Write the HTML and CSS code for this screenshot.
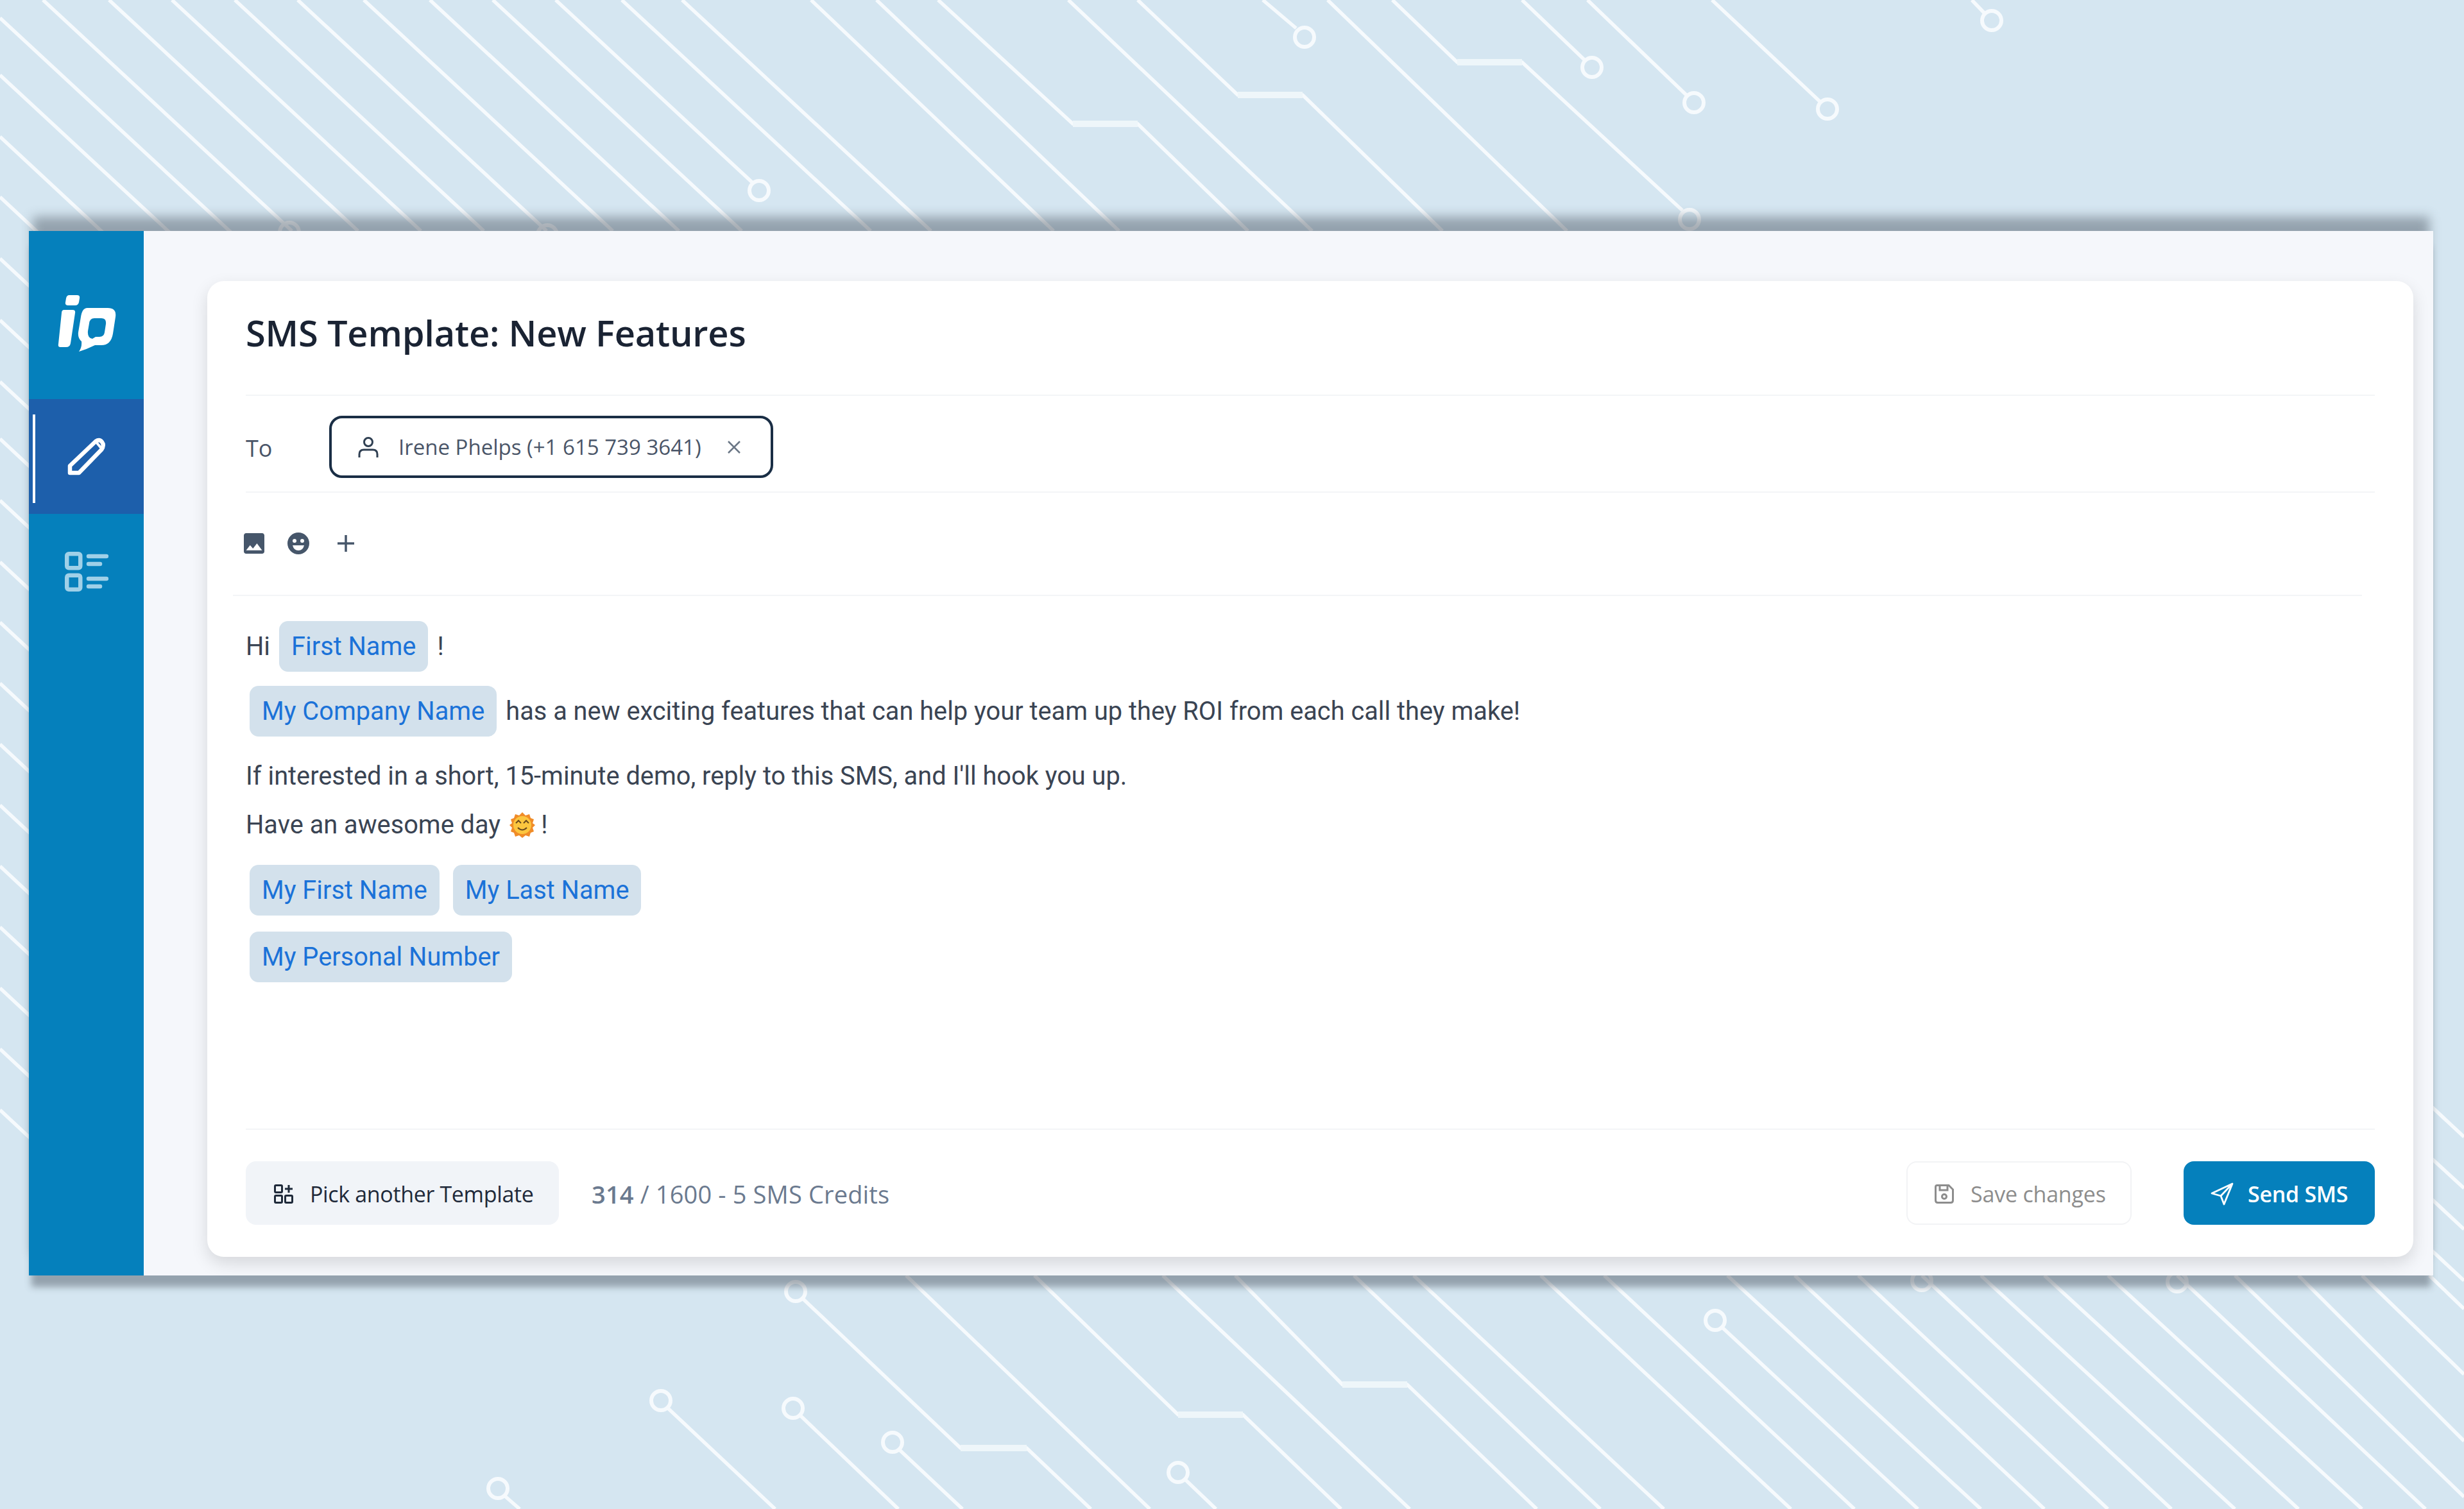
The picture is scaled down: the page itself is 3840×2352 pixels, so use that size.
FILE: index.html
```html
<!DOCTYPE html>
<html>
<head>
    <title>SMS Template</title>
    <link rel="stylesheet" href="styles.css">
</head>
<body>
    <!-- circuit lines behind the app window -->
    <svg class="circuit" viewBox="0 0 3840 2352">
        <path class="trace" d="M67 0L455 360M170 0L558 360M268 0L656 360M366 0L754 360M464 0L852 360M567 0L955 360M670 0L1058 360M768 0L1156 360M866 0L1172 284M969 0L1357 360M1063 0L1451 360M1264 0L1642 360M1366 0L1744 360
            M1462 0L1672 193L1773 193L1945 360M1665 0L2045 360M1773 0L1929 148L2030 148L2248 360M1968 0L2020 44M2069 0L2442 360M2170 0L2271 97L2372 97L2622 328M2372 0L2470 94M2474 0L2628 148M2668 0L2836 158M3073 0L3094 22
            M0 28L388 388M0 117L388 477M0 213L160 362M0 307L60 363M0 403L60 459M0 499L60 555M0 595L60 651M0 684L60 740M0 780L60 836M0 876L60 932M0 970L60 1026M0 1065L60 1121M0 1160L60 1216M0 1255L60 1311M0 1350L60 1406M0 1445L60 1501M0 1540L60 1596M0 1635L60 1691M0 1730L60 1786
            M1252 2025L1497 2257L1600 2257L1700 2352M1041 2195L1208 2352M1248 2207L1400 2352M1402 2260L1500 2352M787 2332L810 2352M1848 2307L1895 2352
            M1412 1988L1792 2352M1612 1988L1836 2205L1937 2205L2090 2352M1812 1988L2197 2352M1925 1988L2092 2158L2193 2158L2395 2352M2110 1988L2494 2352M2203 1988L2593 2352M2401 1988L2791 2352M2500 1988L2890 2352M2685 2070L2989 2352M2692 1988L3087 2352M2797 1988L3186 2352M2896 1988L3285 2352M2995 1988L3384 2352M3087 1988L3483 2352M3186 1988L3582 2352M3285 1988L3681 2352M3393 1988L3780 2352M3483 1988L3840 2333M3582 1988L3840 2246M3681 1988L3840 2142M3786 1988L3840 2040
            M3780 1716L3840 1772M3780 1797L3840 1852M3780 1860L3840 1916M3780 1940L3840 1996" />
        <path class="jog" d="M1672 193H1773M1929 148H2030M2271 97H2372M1497 2257H1600M1836 2205H1937M2092 2158H2193" />
        <circle class="node" cx="1183" cy="297" r="15" />
        <circle class="node" cx="451" cy="362" r="15" />
        <circle class="node" cx="853" cy="366" r="15" />
        <circle class="node" cx="2033" cy="58" r="15" />
        <circle class="node" cx="2481" cy="105" r="15" />
        <circle class="node" cx="2640" cy="160" r="15" />
        <circle class="node" cx="2848" cy="170" r="15" />
        <circle class="node" cx="3104" cy="32" r="15" />
        <circle class="node" cx="2633" cy="342" r="15" />
        <circle class="node" cx="1240" cy="2013" r="15" />
        <circle class="node" cx="1030" cy="2183" r="15" />
        <circle class="node" cx="1236" cy="2195" r="15" />
        <circle class="node" cx="1391" cy="2248" r="15" />
        <circle class="node" cx="776" cy="2320" r="15" />
        <circle class="node" cx="1836" cy="2295" r="15" />
        <circle class="node" cx="2673" cy="2058" r="15" />
        <circle class="node" cx="2995" cy="1996" r="15" />
        <circle class="node" cx="3393" cy="1998" r="15" />
    </svg>

    <div class="stage">
        <div class="window">
            <div class="sidebar">
                <div class="logo">
                    <svg viewBox="85 455 100 100" width="100" height="100">
                        <path fill="#fff" d="M108 460H120Q125 460 124 465L123 471Q122 476 117 476H106Q101 476 102 471L103 465Q104 460 108 460ZM100 483H113Q118 483 117 488L110 535Q109 541 103 541H94Q90 541 91 536L96 488Q96 483 100 483Z" />
                        <path fill="#fff" fill-rule="evenodd" d="M136 480H168Q182 480 180 494L176 520Q173 538 158 538H148Q136 544 123 548Q128 541 127 532Q121 527 122 518L126 494Q128 480 136 480ZM147 496Q140 496 139 504L137 516Q136 527 144 528L149 525H155Q162 525 163 518L165 505Q166 496 158 496Z" />
                    </svg>
                </div>
                <div class="nav-item active">
                    <svg viewBox="100 678 68 68" width="68" height="68">
                        <path fill="none" stroke="#fff" stroke-width="6.500" stroke-linejoin="round" d="M108 726L148 688Q154 684 158 689Q162 694 157 701L122 737H108Z" />
                        <path fill="none" stroke="#fff" stroke-width="4" d="M148 688L158 700" />
                    </svg>
                </div>
                <div class="nav-item">
                    <svg viewBox="0 0 68 62" width="68" height="62">
                        <g fill="none" stroke="#9fd0e8" stroke-width="6.500">
                            <rect x="3.250" y="3.250" width="21" height="22" rx="3" />
                            <rect x="3.250" y="36.750" width="21" height="22" rx="3" />
                            <path stroke-linecap="round" d="M37 7H65M37 19H55M37 42H65M37 54H55" />
                        </g>
                    </svg>
                </div>
            </div>

            <div class="main">
                <div class="card">
                    <div class="card-head">
                        <h1>SMS Template: New Features</h1>
                    </div>

                    <div class="to-row">
                        <span class="to-label">To</span>
                        <div class="recipient">
                            <svg viewBox="0 0 34 34" width="34" height="34">
                                <g fill="none" stroke="#2f3f52" stroke-width="3">
                                    <circle cx="17" cy="9" r="6.500" />
                                    <path d="M3 33V28Q3 21 10 21H24Q31 21 31 28V33" />
                                </g>
                            </svg>
                            <span class="recipient-name">Irene Phelps (+1 615 739 3641)</span>
                            <svg viewBox="0 0 22 22" width="22" height="22">
                                <path fill="none" stroke="#6b7786" stroke-width="2.500" d="M2 2L20 20M20 2L2 20" />
                            </svg>
                        </div>
                    </div>

                    <div class="toolbar">
                        <svg viewBox="3 3 18 18" width="32" height="32">
                            <path fill="#46566a" d="M21 19V5c0-1.100-.900-2-2-2H5c-1.100 0-2 .900-2 2v14c0 1.100.900 2 2 2h14c1.100 0 2-.900 2-2zM8.500 13.500l2.500 3.010L14.500 12l4.500 6H5l3.500-4.500z" />
                        </svg>
                        <svg viewBox="0 0 34 34" width="34" height="34">
                            <circle cx="17" cy="17" r="17" fill="#46566a" />
                            <circle cx="11" cy="13" r="3" fill="#fff" />
                            <circle cx="23" cy="13" r="3" fill="#fff" />
                            <path fill="#fff" d="M8 20H26Q24 28 17 28Q10 28 8 20Z" />
                        </svg>
                        <svg class="add-icon" viewBox="0 0 28 28" width="28" height="28">
                            <path fill="none" stroke="#46566a" stroke-width="3.500" d="M14 1V27M1 14H27" />
                        </svg>
                    </div>

                    <div class="message">
                        <div class="msg-row">
                            <span>Hi</span>
                            <span class="tag">First Name</span>
                            <span>!</span>
                        </div>
                        <div class="msg-row indented">
                            <span class="tag">My Company Name</span>
                            <span>has a new exciting features that can help your team up they ROI from each call they make!</span>
                        </div>
                        <div class="msg-text">
                            <p>If interested in a short, 15-minute demo, reply to this SMS, and I'll hook you up.</p>
                            <p class="with-emoji">Have an awesome day
                                <svg viewBox="0 0 40 40" width="40" height="40">
                                    <path fill="#f08c28" d="M20 0L25 5L31 3L33 9L38 11L36 17L40 20L36 24L38 30L33 32L31 38L25 36L20 40L15 36L9 38L7 32L2 30L4 24L0 20L4 17L2 11L7 9L9 3L15 5Z" />
                                    <circle cx="20" cy="20" r="14" fill="#fcc63f" />
                                    <path fill="none" stroke="#6b4a1c" stroke-width="2" d="M10 17L14 13L18 17M22 17L26 13L30 17M13 24Q20 31 27 24" />
                                </svg><span class="bang">!</span></p>
                        </div>
                        <div class="msg-row indented">
                            <span class="tag">My First Name</span>
                            <span class="tag tag-next">My Last Name</span>
                        </div>
                        <div class="msg-row indented last-row">
                            <span class="tag">My Personal Number</span>
                        </div>
                    </div>

                    <div class="card-foot">
                        <button class="btn btn-soft">
                            <svg viewBox="0 0 30 30" width="30" height="30">
                                <g fill="none" stroke="#1f2a3a" stroke-width="3">
                                    <rect x="1.500" y="1.500" width="11" height="11" rx="1.500" />
                                    <rect x="1.500" y="17.500" width="11" height="11" rx="1.500" />
                                    <rect x="17.500" y="17.500" width="11" height="11" rx="1.500" />
                                    <path d="M23 1V13M17 7H29" />
                                </g>
                            </svg>
                            Pick another Template
                        </button>
                        <span class="counter"><b>314</b> / 1600 - 5 SMS Credits</span>
                        <button class="btn btn-save">
                            <svg viewBox="0 0 30 30" width="30" height="30">
                                <g fill="none" stroke="#8d8d8d" stroke-width="3">
                                    <path d="M4 1.500H22L28.500 8V25Q28.500 28.500 25 28.500H5Q1.500 28.500 1.500 25V4Q1.500 1.500 4 1.500Z" />
                                    <path d="M8 2V9H20V2" />
                                    <circle cx="15" cy="19" r="3.500" />
                                </g>
                            </svg>
                            Save changes
                        </button>
                        <button class="btn btn-send">
                            <svg viewBox="0 0 36 36" width="36" height="36">
                                <path fill="none" stroke="#fff" stroke-width="2.800" stroke-linejoin="round" d="M34 2L2 17L16 21L21 34ZM34 2L16 21" />
                            </svg>
                            Send SMS
                        </button>
                    </div>
                </div>
            </div>
        </div>
    </div>
</body>
</html>
```

FILE: styles.css
```css
body {
    margin: 0;
    width: 3840px;
    height: 2352px;
    overflow: hidden;
    position: relative;
    background-color: #d5e6f1;
    font-family: "Open Sans", "Noto Sans", sans-serif;
}

.circuit {
    position: absolute;
    left: 0;
    top: 0;
    width: 3840px;
    height: 2352px;
}

.trace {
    fill: none;
    stroke: #f6fafd;
    stroke-width: 5.500;
}

.jog {
    fill: none;
    stroke: #eef6fa;
    stroke-width: 10;
}

.node {
    fill: none;
    stroke: #f6fafd;
    stroke-width: 6;
}

.stage {
    position: relative;
    padding: 360px 48px 0 45px;
}

.window {
    display: flex;
    height: 1628px;
    box-shadow: 0 -28px 16px -6px rgba(60, 70, 80, 0.42), 0 22px 10px -4px rgba(60, 70, 80, 0.42);
}

.sidebar {
    width: 179px;
    background-color: #0580bc;
}

.logo {
    height: 262px;
    padding-top: 95px;
    box-sizing: border-box;
    display: flex;
    justify-content: center;
}

.nav-item {
    height: 179px;
    position: relative;
    display: flex;
    align-items: center;
    justify-content: center;
}

.nav-item.active {
    background-color: #1d5fab;
}

.nav-item.active::before {
    content: "";
    position: absolute;
    left: 6px;
    top: 24px;
    width: 4px;
    height: 138px;
    background-color: #fff;
}

.main {
    flex: 1;
    display: flex;
    background-color: #f5f7fb;
    padding: 78px 31px 29px 99px;
}

.card {
    flex: 1;
    display: flex;
    flex-direction: column;
    background-color: #fff;
    border-radius: 26px;
    padding: 0 60px;
    box-shadow: 0 10px 26px rgba(0, 0, 0, 0.13);
}

.card-head {
    height: 179px;
    box-sizing: border-box;
    padding-top: 42px;
    border-bottom: 2px solid #f3f5f7;
}

h1 {
    margin: 0;
    font-size: 56px;
    line-height: 76px;
    font-weight: 600;
    color: #1a2333;
    letter-spacing: -0.200px;
}

.to-row {
    height: 151px;
    box-sizing: border-box;
    padding-top: 10px;
    display: flex;
    align-items: center;
    border-bottom: 2px solid #f3f5f7;
}

.to-label {
    width: 130px;
    padding-top: 3px;
    font-size: 36px;
    color: #4a5568;
}

.recipient {
    width: 692px;
    height: 97px;
    box-sizing: border-box;
    border: 4px solid #1a2e45;
    border-radius: 20px;
    display: flex;
    align-items: center;
    padding-left: 40px;
}

.recipient-name {
    margin: 0 40px 0 30px;
    font-size: 33px;
    color: #4a5568;
    white-space: nowrap;
}

.toolbar {
    height: 161px;
    box-sizing: border-box;
    margin: 0 20px 0 -20px;
    padding: 0 0 2px 17px;
    display: flex;
    align-items: center;
    gap: 36px;
    border-bottom: 2px solid #f3f5f7;
}

.add-icon {
    margin-left: 7px;
}

.message {
    flex: 1;
    display: flex;
    flex-direction: column;
    gap: 22px;
    padding-top: 39px;
    font-family: Roboto, sans-serif;
    font-size: 39.750px;
    color: #3a4453;
}

.msg-row {
    display: flex;
    align-items: center;
    gap: 14px;
}

.indented {
    margin-left: 6px;
}

.last-row {
    margin-top: 3px;
}

.tag {
    height: 79px;
    display: flex;
    align-items: center;
    padding: 0 19px;
    background-color: #d3e1ec;
    border-radius: 14px;
    color: #1b72d8;
}

.tag-next {
    margin-left: 7px;
}

.msg-text {
    margin: 2px 0;
}

.msg-text p {
    margin: 0;
    line-height: 76px;
}

.with-emoji {
    display: flex;
    align-items: center;
    gap: 14px;
}

.bang {
    margin-left: -5px;
}

.card-foot {
    height: 200px;
    box-sizing: border-box;
    border-top: 2px solid #f3f5f7;
    padding-top: 49px;
    display: flex;
    align-items: flex-start;
}

.btn {
    height: 99px;
    box-sizing: border-box;
    border: none;
    border-radius: 16px;
    padding-top: 3px;
    display: flex;
    align-items: center;
    gap: 26px;
    font-family: "Open Sans", sans-serif;
    font-size: 34px;
    white-space: nowrap;
}

.btn-soft {
    width: 488px;
    padding-left: 44px;
    background-color: #f1f4f8;
    color: #1f2a3a;
    font-weight: 500;
    letter-spacing: -0.350px;
}

.counter {
    margin-left: 51px;
    margin-right: auto;
    padding-top: 2px;
    line-height: 99px;
    font-size: 38px;
    color: #6b7a8f;
    letter-spacing: 0.150px;
}

.counter b {
    font-weight: 600;
}

.btn-save {
    width: 351px;
    padding-left: 42px;
    background-color: #fff;
    border: 2px solid #f2f3f5;
    color: #8d8d8d;
    letter-spacing: -0.200px;
}

.btn-send {
    width: 298px;
    margin-left: 81px;
    padding-left: 42px;
    gap: 22px;
    background-color: #0580bc;
    color: #fff;
    font-weight: 600;
    letter-spacing: -0.300px;
}
```
